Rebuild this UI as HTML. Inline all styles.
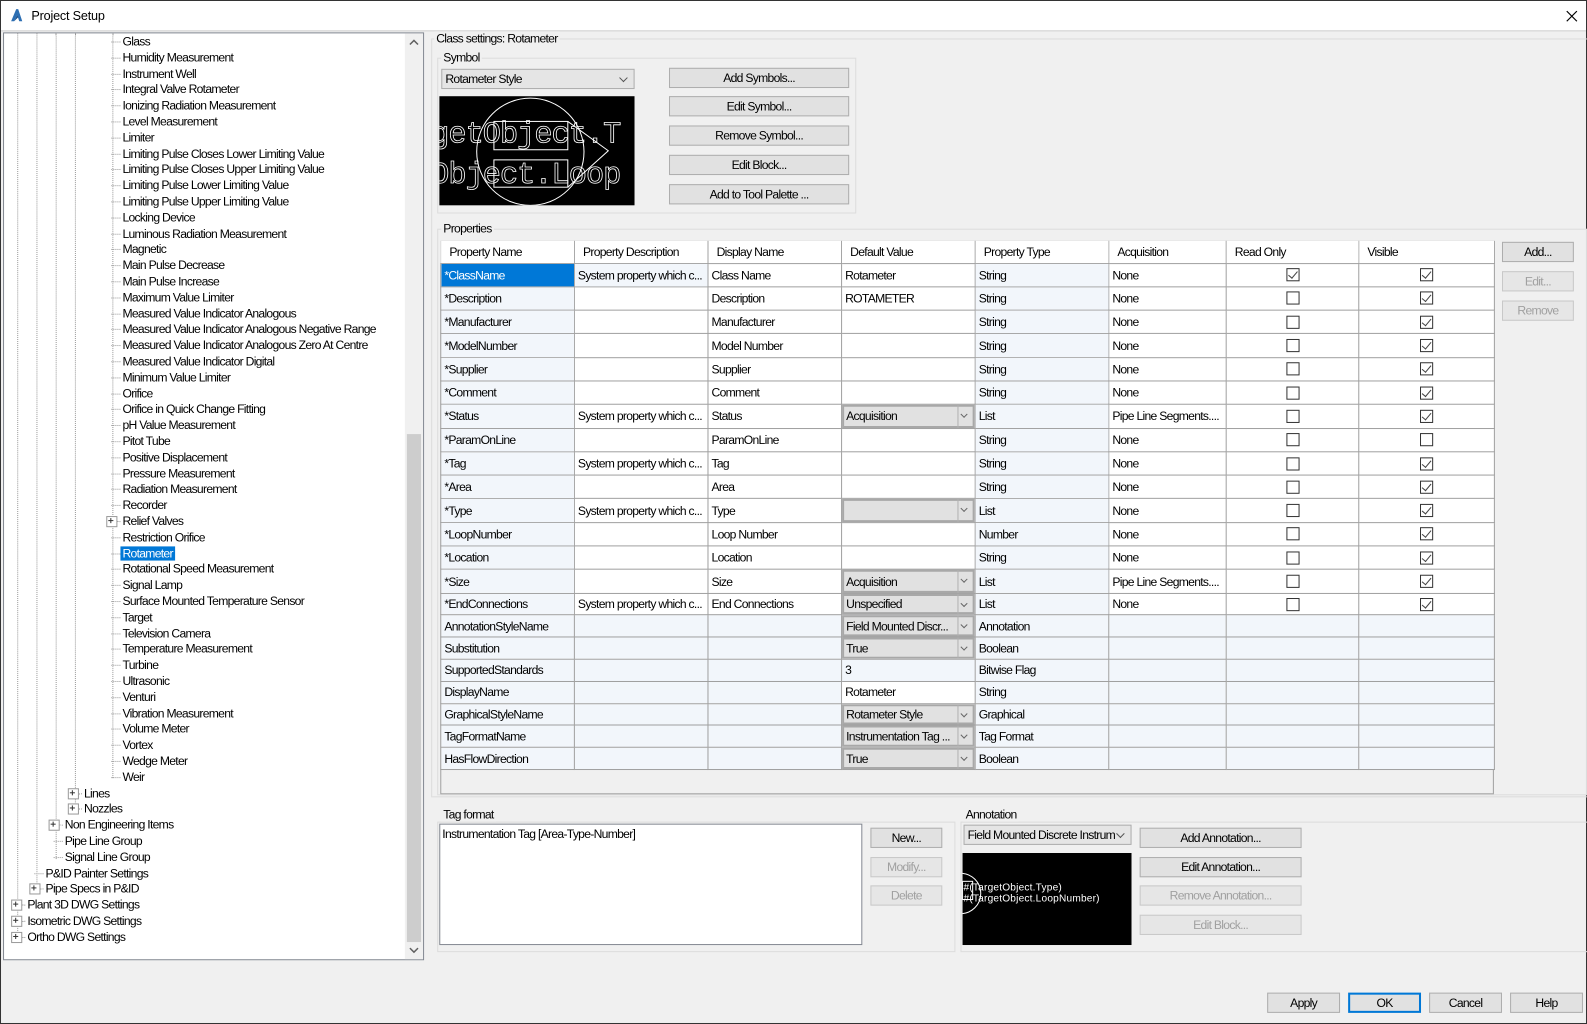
<!DOCTYPE html>
<html><head><meta charset="utf-8"><style>
*{box-sizing:border-box;margin:0;padding:0}
body{width:1587px;height:1024px;overflow:hidden;background:#f0f0f0;font-family:"Liberation Sans",Arial,sans-serif;font-size:12px;color:#000}
.s{position:absolute;left:0;top:0;width:1568px;height:1012px;transform:scale(1.01212,1.01186);transform-origin:0 0;background:#f0f0f0;border:1px solid #333;letter-spacing:-0.7px}
.a{position:absolute}
.title{left:0;top:0;width:1566px;height:30px;background:#fff;border-bottom:1px solid #ccc}
.tree{left:2px;top:31px;width:416px;height:917px;background:#fff;border:1px solid #828790;overflow:hidden}
.t{position:absolute;height:16px;line-height:16px;white-space:nowrap}
.t::before{content:"";position:absolute;left:-11px;top:8px;width:9px;border-top:1px dotted #999}
.b::after{content:"";position:absolute;left:-16px;top:3px;width:9px;height:9px;border:1px solid #999;background:#fff linear-gradient(#333,#333) 1px 3px/5px 1px no-repeat}
.b i{position:absolute;left:-12px;top:5px;width:1px;height:5px;background:#333;z-index:2}
.b::before{left:-6px;width:4px}
.v{position:absolute;width:0;border-left:1px dotted #999;top:0}
.sel{background:#0078d7;color:#fff;padding:0 2px;margin-left:-2px}
.grp{position:absolute;border:1px solid #dcdcdc}
.gl{position:absolute;background:#f0f0f0;padding:0 2px;line-height:14px}
.btn{position:absolute;background:#e1e1e1;border:1px solid #adadad;text-align:center;line-height:18px;height:20px}
.dis{color:#a0a0a0;background:#e6e6e6;border-color:#c8c8c8}
.combo{position:absolute;background:#e5e5e5;border:1px solid #adadad;height:20px;line-height:18px;padding-left:3px}
.combo::after{content:"";position:absolute;right:7px;top:5px;width:5px;height:5px;border-right:1px solid #555;border-bottom:1px solid #555;transform:rotate(45deg)}
table{position:absolute;border-collapse:collapse;table-layout:fixed;background:#fff}
td{border:1px solid #a0a0a0;padding:0 3px;white-space:nowrap;overflow:hidden;position:relative}
tr.h td{border-top:none;border-bottom:1px solid #a0a0a0;border-left:1px solid #e0e0e0;padding-left:8px;background:#fff}
.sh{background:#f2f6fb}
.bl{background:#0078d7;color:#fff}
.dd{background:#e1e1e1;box-shadow:inset 0 0 0 2px #a8a8a8;padding-left:4px}
.dd::after{content:"";position:absolute;right:4px;top:0;bottom:0;width:12px;border-left:1px solid #b0b0b0}
.dd::before{content:"";position:absolute;right:8px;top:7px;width:4px;height:4px;border-right:1px solid #666;border-bottom:1px solid #666;transform:rotate(45deg);z-index:2}
.cb{display:block;margin:0 auto;width:13px;height:13px;border:1px solid #333;background:#fff;position:relative}
.ck::after{content:"";position:absolute;left:3px;top:0px;width:4px;height:8px;border-right:1px solid #444;border-bottom:1px solid #444;transform:rotate(40deg)}
</style></head><body><div class="s">
<div class="a title">
 <svg class="a" style="left:9px;top:7px" width="13" height="14"><path d="M1 13 L6 1 L8 1 L12 13 L9 13 L7 7 L4 13Z" fill="#2d6fb3"/><path d="M4 13 L7 7 L8 9Z" fill="#1a4f8a"/></svg>
 <div class="a" style="left:30px;top:8px;font-size:12.5px;letter-spacing:-0.2px">Project Setup</div>
 <svg class="a" style="left:1546px;top:9px" width="12" height="12"><path d="M1 1L11 11M11 1L1 11" stroke="#000" stroke-width="1.2"/></svg>
</div>
<div class="a tree">
 <div class="v" style="left:13px;height:895px"></div>
 <div class="v" style="left:32px;height:847px"></div>
 <div class="v" style="left:51px;height:816px"></div>
 <div class="v" style="left:70px;height:768px"></div>
 <div class="v" style="left:107px;height:736px"></div>
 <div style="position:absolute;left:-4px;top:0">
 <div class="t" style="left:121px;top:0px">Glass</div>
 <div class="t" style="left:121px;top:15.8px">Humidity Measurement</div>
 <div class="t" style="left:121px;top:31.6px">Instrument Well</div>
 <div class="t" style="left:121px;top:47.4px">Integral Valve Rotameter</div>
 <div class="t" style="left:121px;top:63.2px">Ionizing Radiation Measurement</div>
 <div class="t" style="left:121px;top:79px">Level Measurement</div>
 <div class="t" style="left:121px;top:94.8px">Limiter</div>
 <div class="t" style="left:121px;top:110.6px">Limiting Pulse Closes Lower Limiting Value</div>
 <div class="t" style="left:121px;top:126.4px">Limiting Pulse Closes Upper Limiting Value</div>
 <div class="t" style="left:121px;top:142.2px">Limiting Pulse Lower Limiting Value</div>
 <div class="t" style="left:121px;top:158px">Limiting Pulse Upper Limiting Value</div>
 <div class="t" style="left:121px;top:173.8px">Locking Device</div>
 <div class="t" style="left:121px;top:189.6px">Luminous Radiation Measurement</div>
 <div class="t" style="left:121px;top:205.4px">Magnetic</div>
 <div class="t" style="left:121px;top:221.2px">Main Pulse Decrease</div>
 <div class="t" style="left:121px;top:237px">Main Pulse Increase</div>
 <div class="t" style="left:121px;top:252.8px">Maximum Value Limiter</div>
 <div class="t" style="left:121px;top:268.6px">Measured Value Indicator Analogous</div>
 <div class="t" style="left:121px;top:284.4px">Measured Value Indicator Analogous Negative Range</div>
 <div class="t" style="left:121px;top:300.2px">Measured Value Indicator Analogous Zero At Centre</div>
 <div class="t" style="left:121px;top:316px">Measured Value Indicator Digital</div>
 <div class="t" style="left:121px;top:331.8px">Minimum Value Limiter</div>
 <div class="t" style="left:121px;top:347.6px">Orifice</div>
 <div class="t" style="left:121px;top:363.4px">Orifice in Quick Change Fitting</div>
 <div class="t" style="left:121px;top:379.2px">pH Value Measurement</div>
 <div class="t" style="left:121px;top:395px">Pitot Tube</div>
 <div class="t" style="left:121px;top:410.8px">Positive Displacement</div>
 <div class="t" style="left:121px;top:426.6px">Pressure Measurement</div>
 <div class="t" style="left:121px;top:442.4px">Radiation Measurement</div>
 <div class="t" style="left:121px;top:458.2px">Recorder</div>
 <div class="t b" style="left:121px;top:474px"><i></i>Relief Valves</div>
 <div class="t" style="left:121px;top:489.8px">Restriction Orifice</div>
 <div class="t" style="left:121px;top:505.6px"><span class="sel">Rotameter</span></div>
 <div class="t" style="left:121px;top:521.4px">Rotational Speed Measurement</div>
 <div class="t" style="left:121px;top:537.2px">Signal Lamp</div>
 <div class="t" style="left:121px;top:553px">Surface Mounted Temperature Sensor</div>
 <div class="t" style="left:121px;top:568.8px">Target</div>
 <div class="t" style="left:121px;top:584.6px">Television Camera</div>
 <div class="t" style="left:121px;top:600.4px">Temperature Measurement</div>
 <div class="t" style="left:121px;top:616.2px">Turbine</div>
 <div class="t" style="left:121px;top:632px">Ultrasonic</div>
 <div class="t" style="left:121px;top:647.8px">Venturi</div>
 <div class="t" style="left:121px;top:663.6px">Vibration Measurement</div>
 <div class="t" style="left:121px;top:679.4px">Volume Meter</div>
 <div class="t" style="left:121px;top:695.2px">Vortex</div>
 <div class="t" style="left:121px;top:711px">Wedge Meter</div>
 <div class="t" style="left:121px;top:726.8px">Weir</div>
 <div class="t b" style="left:83px;top:742.6px"><i></i>Lines</div>
 <div class="t b" style="left:83px;top:758.4px"><i></i>Nozzles</div>
 <div class="t b" style="left:64px;top:774.2px"><i></i>Non Engineering Items</div>
 <div class="t" style="left:64px;top:790px">Pipe Line Group</div>
 <div class="t" style="left:64px;top:805.8px">Signal Line Group</div>
 <div class="t" style="left:45px;top:821.6px">P&amp;ID Painter Settings</div>
 <div class="t b" style="left:45px;top:837.4px"><i></i>Pipe Specs in P&amp;ID</div>
 <div class="t b" style="left:27px;top:853.2px"><i></i>Plant 3D DWG Settings</div>
 <div class="t b" style="left:27px;top:869px"><i></i>Isometric DWG Settings</div>
 <div class="t b" style="left:27px;top:884.8px"><i></i>Ortho DWG Settings</div>
 </div>
 <div class="a" style="left:396px;top:0;width:18px;height:915px;background:#f0f0f0"></div>
 <div class="a" style="left:398px;top:396px;width:14px;height:502px;background:#cdcdcd"></div>
 <svg class="a" style="left:399px;top:5px" width="12" height="8"><path d="M2 6L6 2L10 6" stroke="#606060" fill="none" stroke-width="1.5"/></svg>
 <svg class="a" style="left:399px;top:902px" width="12" height="8"><path d="M2 2L6 6L10 2" stroke="#606060" fill="none" stroke-width="1.5"/></svg>
</div>

<div class="grp" style="left:425px;top:37px;width:1150px;height:750px"></div>
<div class="gl" style="left:428px;top:30px">Class settings: Rotameter</div>
<div class="grp" style="left:431px;top:56px;width:414px;height:154px"></div>
<div class="gl" style="left:435px;top:49px">Symbol</div>
<div class="combo" style="left:435px;top:67px;width:191px">Rotameter Style</div>
<svg class="a" style="left:433px;top:94px" width="193" height="108"><rect width="193" height="108" fill="#000"/>
<g stroke="#fff" fill="none" stroke-width="1"><circle cx="90" cy="55" r="53"/><rect x="54" y="25" width="73" height="28"/><rect x="54" y="63" width="73" height="27"/><path d="M127 25L167 54L127 90"/></g>
<text x="-8" y="46" fill="none" stroke="#fff" stroke-width="0.8" font-family="Liberation Mono,monospace" font-size="30" letter-spacing="-1">getObject.T</text>
<text x="-8" y="86" fill="none" stroke="#fff" stroke-width="0.8" font-family="Liberation Mono,monospace" font-size="30" letter-spacing="-1">Object.Loop</text></svg>
<div class="btn" style="left:660px;top:66px;width:178px">Add Symbols...</div>
<div class="btn" style="left:660px;top:94px;width:178px">Edit Symbol...</div>
<div class="btn" style="left:660px;top:123px;width:178px">Remove Symbol...</div>
<div class="btn" style="left:660px;top:152px;width:178px">Edit Block...</div>
<div class="btn" style="left:660px;top:181px;width:178px">Add to Tool Palette ...</div>

<div class="grp" style="left:431px;top:225px;width:1136px;height:560px"></div>
<div class="gl" style="left:435px;top:218px">Properties</div>
<div class="a" style="left:434px;top:237px;width:1041px;height:547px;background:#f0f0f0;border:1px solid #a0a0a0"></div>
<table style="left:434px;top:237px;width:1041px">
<colgroup><col style="width:132px"><col style="width:132px"><col style="width:132px"><col style="width:132px"><col style="width:132px"><col style="width:116px"><col style="width:131px"><col style="width:134px"></colgroup>
<tr class="h" style="height:22px"><td>Property Name</td><td>Property Description</td><td>Display Name</td><td>Default Value</td><td>Property Type</td><td>Acquisition</td><td>Read Only</td><td>Visible</td></tr>
<tr style="height:23.3px"><td class="bl">*ClassName</td><td class="sh">System property which c...</td><td>Class Name</td><td>Rotameter</td><td class="sh">String</td><td>None</td><td><span class="cb ck"></span></td><td><span class="cb ck"></span></td></tr>
<tr style="height:23.3px"><td class="sh">*Description</td><td></td><td>Description</td><td>ROTAMETER</td><td class="sh">String</td><td>None</td><td><span class="cb"></span></td><td><span class="cb ck"></span></td></tr>
<tr style="height:23.3px"><td class="sh">*Manufacturer</td><td></td><td>Manufacturer</td><td></td><td class="sh">String</td><td>None</td><td><span class="cb"></span></td><td><span class="cb ck"></span></td></tr>
<tr style="height:23.3px"><td class="sh">*ModelNumber</td><td></td><td>Model Number</td><td></td><td class="sh">String</td><td>None</td><td><span class="cb"></span></td><td><span class="cb ck"></span></td></tr>
<tr style="height:23.3px"><td class="sh">*Supplier</td><td></td><td>Supplier</td><td></td><td class="sh">String</td><td>None</td><td><span class="cb"></span></td><td><span class="cb ck"></span></td></tr>
<tr style="height:23.3px"><td class="sh">*Comment</td><td></td><td>Comment</td><td></td><td class="sh">String</td><td>None</td><td><span class="cb"></span></td><td><span class="cb ck"></span></td></tr>
<tr style="height:23.3px"><td class="sh">*Status</td><td>System property which c...</td><td>Status</td><td class="dd">Acquisition</td><td class="sh">List</td><td>Pipe Line Segments....</td><td><span class="cb"></span></td><td><span class="cb ck"></span></td></tr>
<tr style="height:23.3px"><td class="sh">*ParamOnLine</td><td></td><td>ParamOnLine</td><td></td><td class="sh">String</td><td>None</td><td><span class="cb"></span></td><td><span class="cb"></span></td></tr>
<tr style="height:23.3px"><td class="sh">*Tag</td><td>System property which c...</td><td>Tag</td><td></td><td class="sh">String</td><td>None</td><td><span class="cb"></span></td><td><span class="cb ck"></span></td></tr>
<tr style="height:23.3px"><td class="sh">*Area</td><td></td><td>Area</td><td></td><td class="sh">String</td><td>None</td><td><span class="cb"></span></td><td><span class="cb ck"></span></td></tr>
<tr style="height:23.3px"><td class="sh">*Type</td><td>System property which c...</td><td>Type</td><td class="dd"></td><td class="sh">List</td><td>None</td><td><span class="cb"></span></td><td><span class="cb ck"></span></td></tr>
<tr style="height:23.3px"><td class="sh">*LoopNumber</td><td></td><td>Loop Number</td><td></td><td class="sh">Number</td><td>None</td><td><span class="cb"></span></td><td><span class="cb ck"></span></td></tr>
<tr style="height:23.3px"><td class="sh">*Location</td><td></td><td>Location</td><td></td><td class="sh">String</td><td>None</td><td><span class="cb"></span></td><td><span class="cb ck"></span></td></tr>
<tr style="height:23.3px"><td class="sh">*Size</td><td></td><td>Size</td><td class="dd">Acquisition</td><td class="sh">List</td><td>Pipe Line Segments....</td><td><span class="cb"></span></td><td><span class="cb ck"></span></td></tr>
<tr style="height:21.8px"><td class="sh">*EndConnections</td><td>System property which c...</td><td>End Connections</td><td class="dd">Unspecified</td><td class="sh">List</td><td>None</td><td><span class="cb"></span></td><td><span class="cb ck"></span></td></tr>
<tr style="height:21.8px" class="sh"><td>AnnotationStyleName</td><td></td><td></td><td class="dd">Field Mounted Discr...</td><td>Annotation</td><td></td><td></td><td></td></tr>
<tr style="height:21.8px" class="sh"><td>Substitution</td><td></td><td></td><td class="dd">True</td><td>Boolean</td><td></td><td></td><td></td></tr>
<tr style="height:21.8px" class="sh"><td>SupportedStandards</td><td></td><td></td><td>3</td><td>Bitwise Flag</td><td></td><td></td><td></td></tr>
<tr style="height:21.8px" class="sh"><td>DisplayName</td><td></td><td></td><td style="background:#fff">Rotameter</td><td>String</td><td></td><td></td><td></td></tr>
<tr style="height:21.8px" class="sh"><td>GraphicalStyleName</td><td></td><td></td><td class="dd">Rotameter Style</td><td>Graphical</td><td></td><td></td><td></td></tr>
<tr style="height:21.8px" class="sh"><td>TagFormatName</td><td></td><td></td><td class="dd">Instrumentation Tag ...</td><td>Tag Format</td><td></td><td></td><td></td></tr>
<tr style="height:21.8px" class="sh"><td>HasFlowDirection</td><td></td><td></td><td class="dd">True</td><td>Boolean</td><td></td><td></td><td></td></tr>
</table>
<div class="btn" style="left:1483px;top:238px;width:71px">Add...</div>
<div class="btn dis" style="left:1483px;top:267px;width:71px">Edit...</div>
<div class="btn dis" style="left:1483px;top:296px;width:71px">Remove</div>

<div class="grp" style="left:431px;top:811px;width:512px;height:129px"></div>
<div class="gl" style="left:435px;top:797px">Tag format</div>
<div class="a" style="left:433px;top:813px;width:418px;height:120px;background:#fff;border:1px solid #828790;padding:2px 2px">Instrumentation Tag [Area-Type-Number]</div>
<div class="btn" style="left:859px;top:817px;width:71px">New...</div>
<div class="btn dis" style="left:859px;top:846px;width:71px">Modify...</div>
<div class="btn dis" style="left:859px;top:874px;width:71px">Delete</div>

<div class="grp" style="left:948px;top:811px;width:620px;height:129px"></div>
<div class="gl" style="left:951px;top:797px">Annotation</div>
<div class="combo" style="left:951px;top:814px;width:166px;overflow:hidden;white-space:nowrap;padding-right:18px">Field Mounted Discrete Instrum</div>
<svg class="a" style="left:950px;top:842px" width="167" height="91"><rect width="167" height="91" fill="#000"/>
<circle cx="-2" cy="40" r="20" stroke="#fff" fill="none"/><rect x="0" y="28" width="10" height="18" stroke="#fff" fill="none"/>
<text x="1" y="37" fill="#fff" font-family="Liberation Sans,sans-serif" font-size="10" letter-spacing="0.2">#(TargetObject.Type)</text>
<text x="1" y="48" fill="#fff" font-family="Liberation Sans,sans-serif" font-size="10" letter-spacing="0.2">#(TargetObject.LoopNumber)</text></svg>
<div class="btn" style="left:1125px;top:817px;width:160px">Add Annotation...</div>
<div class="btn" style="left:1125px;top:846px;width:160px">Edit Annotation...</div>
<div class="btn dis" style="left:1125px;top:874px;width:160px">Remove Annotation...</div>
<div class="btn dis" style="left:1125px;top:903px;width:160px">Edit Block...</div>

<div class="btn" style="left:1251px;top:980px;width:72px">Apply</div>
<div class="btn" style="left:1331px;top:980px;width:72px;border:2px solid #0078d7;line-height:16px">OK</div>
<div class="btn" style="left:1411px;top:980px;width:72px">Cancel</div>
<div class="btn" style="left:1491px;top:980px;width:72px">Help</div>
</div></body></html>
